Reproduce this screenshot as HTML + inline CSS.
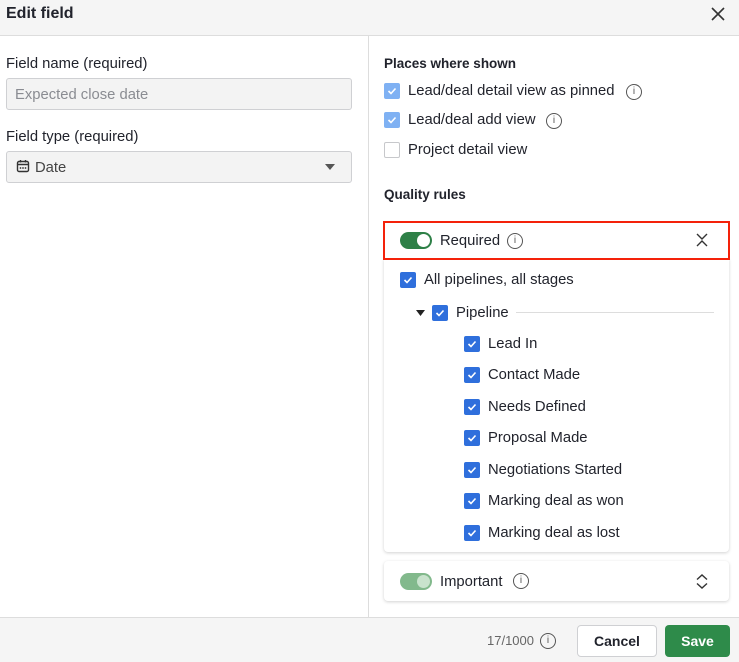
<!DOCTYPE html><html><head><style>
*{box-sizing:border-box;margin:0;padding:0}
body{width:739px;height:662px;position:relative;font-family:"Liberation Sans",sans-serif;color:#21232c;background:#fff;overflow:hidden;font-size:14px}
.a{position:absolute;white-space:nowrap}
.cb{position:absolute;width:16px;height:16px;border-radius:2px;background:#2f6fdc}
.cb svg{position:absolute;left:2px;top:2px}
.lt{background:#7fb1f3}
.em{border:1.5px solid #c7c8cb;background:#fff}
.t{position:absolute;white-space:nowrap;font-size:14.8px;line-height:18px}
.info{position:absolute;width:16px;height:16px;border:1.3px solid #555;border-radius:50%;font-size:10px;line-height:13px;text-align:center;color:#555;font-family:"Liberation Sans",sans-serif}
</style></head><body>
<div class="a" style="left:0;top:0;width:739px;height:36px;background:#f5f5f5;border-bottom:1px solid #ddd"></div>
<div class="a" style="left:6px;top:5px;font-size:16px;font-weight:bold">Edit field</div>
<svg class="a" style="left:711px;top:7px" width="14" height="14"><path d="M1 1L13 13M13 1L1 13" stroke="#333" stroke-width="1.6"/></svg>
<div class="a" style="left:368px;top:36px;width:1px;height:581px;background:#ddd"></div>
<div class="t" style="left:6px;top:55px">Field name (required)</div>
<div class="a" style="left:6px;top:78px;width:346px;height:32px;border:1px solid #cfd0d3;border-radius:3px;background:#f3f3f3"></div>
<div class="t" style="left:15px;top:86px;color:#8a8c92">Expected close date</div>
<div class="t" style="left:6px;top:128px">Field type (required)</div>
<div class="a" style="left:6px;top:151px;width:346px;height:32px;border:1px solid #cfd0d3;border-radius:3px;background:#f3f3f3"></div>
<svg class="a" style="left:16px;top:159px" width="14" height="14"><rect x="1.5" y="2.5" width="11" height="10" rx="1.5" fill="none" stroke="#333" stroke-width="1.4"/><path d="M1.5 5.5H12.5M4.5 1V3.5M9.5 1V3.5" stroke="#333" stroke-width="1.4"/><circle cx="4.5" cy="9" r=".9" fill="#333"/><circle cx="7" cy="9" r=".9" fill="#333"/><circle cx="9.5" cy="9" r=".9" fill="#333"/></svg>
<div class="t" style="left:35px;top:159px;color:#444">Date</div>
<svg class="a" style="left:325px;top:164px" width="10" height="6"><path d="M0 0H10L5 6Z" fill="#555"/></svg>

<div class="t" style="left:384px;top:55px;font-weight:bold;font-size:13.5px">Places where shown</div>
<div class="cb lt" style="left:384px;top:83px"><svg width="12" height="12"><path d="M2.5 6L5 8.5L9.5 3.5" stroke="#fff" stroke-width="1.6" fill="none"/></svg></div>
<div class="t" style="left:408px;top:82px">Lead/deal detail view as pinned</div><div class="info" style="left:626px;top:84px">i</div>
<div class="cb lt" style="left:384px;top:112px"><svg width="12" height="12"><path d="M2.5 6L5 8.5L9.5 3.5" stroke="#fff" stroke-width="1.6" fill="none"/></svg></div>
<div class="t" style="left:408px;top:111px">Lead/deal add view</div><div class="info" style="left:546px;top:113px">i</div>
<div class="cb em" style="left:384px;top:142px"></div>
<div class="t" style="left:408px;top:141px">Project detail view</div>
<div class="t" style="left:384px;top:186px;font-weight:bold;font-size:13.5px">Quality rules</div>

<div class="a" style="left:384px;top:259px;width:345px;height:293px;background:#fff;border-radius:0 0 4px 4px;box-shadow:0 1px 3px rgba(0,0,0,.18)"></div>
<div class="a" style="left:383px;top:221px;width:347px;height:39px;border:2px solid #f4220a;background:#fff"></div>
<div class="a" style="left:400px;top:232px;width:32px;height:17px;border-radius:9px;background:#2e8047"></div>
<div class="a" style="left:417px;top:234px;width:13px;height:13px;border-radius:50%;background:#fff"></div>
<div class="t" style="left:440px;top:232px">Required</div><div class="info" style="left:507px;top:233px">i</div>
<svg class="a" style="left:696px;top:233px" width="12" height="14"><path d="M1 1L6 6L11 1M1 13L6 8L11 13" stroke="#333" stroke-width="1.4" fill="none"/></svg>
<div class="cb" style="left:400px;top:272px"><svg width="12" height="12"><path d="M2.5 6L5 8.5L9.5 3.5" stroke="#fff" stroke-width="1.6" fill="none"/></svg></div>
<div class="t" style="left:424px;top:271px">All pipelines, all stages</div>
<svg class="a" style="left:416px;top:310px" width="9" height="6"><path d="M0 0H9L4.5 6Z" fill="#222"/></svg>
<div class="cb" style="left:432px;top:305px"><svg width="12" height="12"><path d="M2.5 6L5 8.5L9.5 3.5" stroke="#fff" stroke-width="1.6" fill="none"/></svg></div>
<div class="t" style="left:456px;top:304px">Pipeline</div>
<div class="a" style="left:516px;top:312px;width:198px;height:1px;background:#ddd"></div>
<div class="cb" style="left:464px;top:336px"><svg width="12" height="12"><path d="M2.5 6L5 8.5L9.5 3.5" stroke="#fff" stroke-width="1.6" fill="none"/></svg></div><div class="t" style="left:488px;top:335px">Lead In</div>
<div class="cb" style="left:464px;top:367px"><svg width="12" height="12"><path d="M2.5 6L5 8.5L9.5 3.5" stroke="#fff" stroke-width="1.6" fill="none"/></svg></div><div class="t" style="left:488px;top:366px">Contact Made</div>
<div class="cb" style="left:464px;top:399px"><svg width="12" height="12"><path d="M2.5 6L5 8.5L9.5 3.5" stroke="#fff" stroke-width="1.6" fill="none"/></svg></div><div class="t" style="left:488px;top:398px">Needs Defined</div>
<div class="cb" style="left:464px;top:430px"><svg width="12" height="12"><path d="M2.5 6L5 8.5L9.5 3.5" stroke="#fff" stroke-width="1.6" fill="none"/></svg></div><div class="t" style="left:488px;top:429px">Proposal Made</div>
<div class="cb" style="left:464px;top:462px"><svg width="12" height="12"><path d="M2.5 6L5 8.5L9.5 3.5" stroke="#fff" stroke-width="1.6" fill="none"/></svg></div><div class="t" style="left:488px;top:461px">Negotiations Started</div>
<div class="cb" style="left:464px;top:493px"><svg width="12" height="12"><path d="M2.5 6L5 8.5L9.5 3.5" stroke="#fff" stroke-width="1.6" fill="none"/></svg></div><div class="t" style="left:488px;top:492px">Marking deal as won</div>
<div class="cb" style="left:464px;top:525px"><svg width="12" height="12"><path d="M2.5 6L5 8.5L9.5 3.5" stroke="#fff" stroke-width="1.6" fill="none"/></svg></div><div class="t" style="left:488px;top:524px">Marking deal as lost</div>

<div class="a" style="left:384px;top:561px;width:345px;height:40px;background:#fff;border-radius:4px;box-shadow:0 1px 3px rgba(0,0,0,.18)"></div>
<div class="a" style="left:400px;top:573px;width:32px;height:17px;border-radius:9px;background:#82b98c"></div>
<div class="a" style="left:417px;top:575px;width:13px;height:13px;border-radius:50%;background:#c9e3cd"></div>
<div class="t" style="left:440px;top:573px">Important</div><div class="info" style="left:513px;top:573px">i</div>
<svg class="a" style="left:696px;top:574px" width="12" height="15"><path d="M1 5.5L6 1L11 5.5M1 9.5L6 14L11 9.5" stroke="#333" stroke-width="1.4" fill="none"/></svg>

<div class="a" style="left:0;top:617px;width:739px;height:45px;background:#f5f5f5;border-top:1px solid #ddd"></div>
<div class="a" style="left:487px;top:633px;font-size:13px;color:#666">17/1000</div><div class="info" style="left:540px;top:633px">i</div>
<div class="a" style="left:577px;top:625px;width:80px;height:32px;border:1px solid #cfd0d3;border-radius:4px;background:#fff;text-align:center;line-height:30px;font-weight:bold;font-size:14px">Cancel</div>
<div class="a" style="left:665px;top:625px;width:65px;height:32px;border-radius:4px;background:#2e8b4a;color:#fff;text-align:center;line-height:32px;font-weight:bold;font-size:14px">Save</div>
</body></html>
